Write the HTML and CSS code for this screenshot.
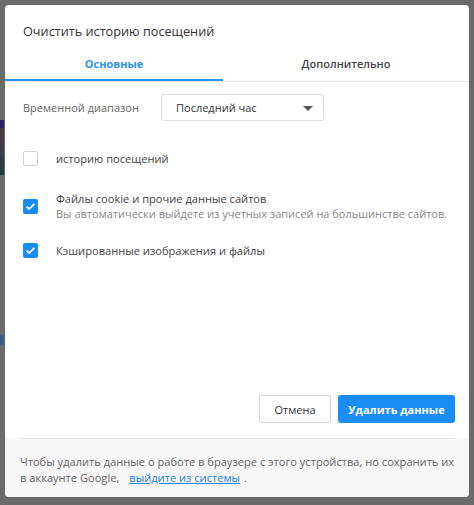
FILE: index.html
```html
<!DOCTYPE html>
<html lang="ru">
<head>
<meta charset="utf-8">
<link rel="stylesheet" href="styles.css">
</head>
<body>
<div class="dialog">
  <div class="title">Очистить историю посещений</div>
  <div class="tabs">
    <div class="tab active">Основные</div>
    <div class="tab">Дополнительно</div>
  </div>
  <div class="content">
    <div class="range-row">
      <span class="range-label">Временной диапазон</span>
      <div class="select">
        <span>Последний час</span>
        <span class="arrow"></span>
      </div>
    </div>
    <div class="option single first">
      <span class="cb"></span>
      <div class="opt-text"><div class="opt-title">историю посещений</div></div>
    </div>
    <div class="option double">
      <span class="cb checked"><svg viewBox="0 0 15 15" width="15" height="15"><path d="M3.6 7.6 L6.2 10.1 L11.4 4.9" fill="none" stroke="#fff" stroke-width="1.8"/></svg></span>
      <div class="opt-text">
        <div class="opt-title">Файлы cookie и прочие данные сайтов</div>
        <div class="opt-sub">Вы автоматически выйдете из учетных записей на большинстве сайтов.</div>
      </div>
    </div>
    <div class="option single last">
      <span class="cb checked"><svg viewBox="0 0 15 15" width="15" height="15"><path d="M3.6 7.6 L6.2 10.1 L11.4 4.9" fill="none" stroke="#fff" stroke-width="1.8"/></svg></span>
      <div class="opt-text"><div class="opt-title">Кэшированные изображения и файлы</div></div>
    </div>
  </div>
  <div class="buttons">
    <button class="btn cancel">Отмена</button>
    <button class="btn primary">Удалить данные</button>
  </div>
  <div class="footer">
    <div class="footer-inner">
      <div class="footer-line">Чтобы удалить данные о работе в браузере с этого устройства, но сохранить их</div>
      <div class="footer-line"><span>в аккаунте Google,</span><a href="#" class="link">выйдите из системы</a><span>.</span></div>
    </div>
  </div>
</div>
</body>
</html>
```

FILE: styles.css
```css
html, body {
  margin: 0;
  padding: 0;
}
body {
  width: 474px;
  height: 505px;
  box-sizing: border-box;
  padding: 5px 5px 8px 5px;
  background-color: #6a6a6a;
  background-image:
    linear-gradient(to bottom,
      transparent 0, transparent 120px,
      #2b1d6b 120px, #2b1d6b 128px,
      #4a3440 128px, #3a3a48 150px, #1f3a44 175px,
      transparent 175px, transparent 335px,
      #3d5a80 335px, #3d5a80 345px,
      transparent 345px);
  background-size: 4px 505px;
  background-repeat: no-repeat;
  font-family: "Open Sans", "Noto Sans", sans-serif;
  overflow: hidden;
}
.dialog {
  width: 464px;
  height: 492px;
  background: #fff;
  border-radius: 4px;
  display: flex;
  flex-direction: column;
  overflow: hidden;
}
.title {
  font-size: 12.7px;
  color: #333;
  padding: 15px 0 0 18px;
  height: 22px;
  line-height: 22px;
}
.tabs {
  display: flex;
  margin-top: 7px;
  border-bottom: 1px solid #e8e8e8;
}
.tab {
  height: 32px;
  line-height: 30px;
  text-align: center;
  font-size: 11px;
  font-weight: 600;
  color: #444;
  box-sizing: border-box;
}
.tab.active {
  width: 218px;
  color: #2d93f0;
  font-weight: 700;
  border-bottom: 2px solid #2d93f0;
  margin-bottom: -1px;
}
.tab:last-child {
  flex: 1;
}
.content {
  flex: 1;
  padding: 12px 0 0 18px;
}
.range-row {
  display: flex;
  align-items: center;
  height: 27px;
}
.range-label {
  width: 138px;
  font-size: 11px;
  color: #666;
}
.select {
  width: 163px;
  height: 27px;
  box-sizing: border-box;
  border: 1px solid #dcdcdc;
  border-radius: 3px;
  display: flex;
  align-items: center;
  justify-content: space-between;
  padding: 0 10px 0 14px;
  font-size: 11px;
  color: #333;
}
.arrow {
  width: 0;
  height: 0;
  border-left: 5px solid transparent;
  border-right: 5px solid transparent;
  border-top: 5px solid #555;
  margin-top: 1px;
}
.option {
  display: flex;
  align-items: center;
}
.option.single {
  height: 27px;
}
.option.first {
  margin-top: 24px;
}
.option.double {
  margin-top: 18px;
  height: 32px;
}
.option.last {
  margin-top: 15px;
}
.cb {
  width: 15px;
  height: 15px;
  box-sizing: border-box;
  border: 1px solid #d2d2d2;
  border-radius: 2px;
  flex-shrink: 0;
  display: block;
  margin-right: 18px;
}
.cb svg {
  display: block;
}
.cb.checked {
  background: #1a8cf5;
  border: none;
}
.opt-text {
  display: flex;
  flex-direction: column;
}
.opt-title {
  font-size: 11.1px;
  color: #444;
  line-height: 15px;
}
.opt-sub {
  font-size: 11px;
  color: #888;
  line-height: 15px;
}
.buttons {
  display: flex;
  justify-content: flex-end;
  gap: 7px;
  padding: 0 14px 0 0;
  margin-bottom: 15px;
}
.btn {
  height: 28px;
  border-radius: 3px;
  font-family: inherit;
  font-size: 11px;
  white-space: nowrap;
  cursor: pointer;
}
.btn.cancel {
  width: 72px;
  background: #fff;
  border: 1px solid #d4d4d4;
  color: #333;
}
.btn.primary {
  width: 117px;
  background: #1a8cf5;
  border: none;
  color: #fff;
  font-weight: 700;
}
.footer {
  background: #f7f7f7;
  padding: 0 14px 0 15px;
  height: 59px;
}
.footer-inner {
  border-top: 1px solid #e2e2e2;
  padding-top: 15px;
  font-size: 11.1px;
  line-height: 16px;
  color: #666;
}
.footer-line {
  display: flex;
  white-space: nowrap;
}
.link {
  color: #1a7fe0;
  text-decoration: underline;
  margin: 0 4px 0 10px;
}
```
